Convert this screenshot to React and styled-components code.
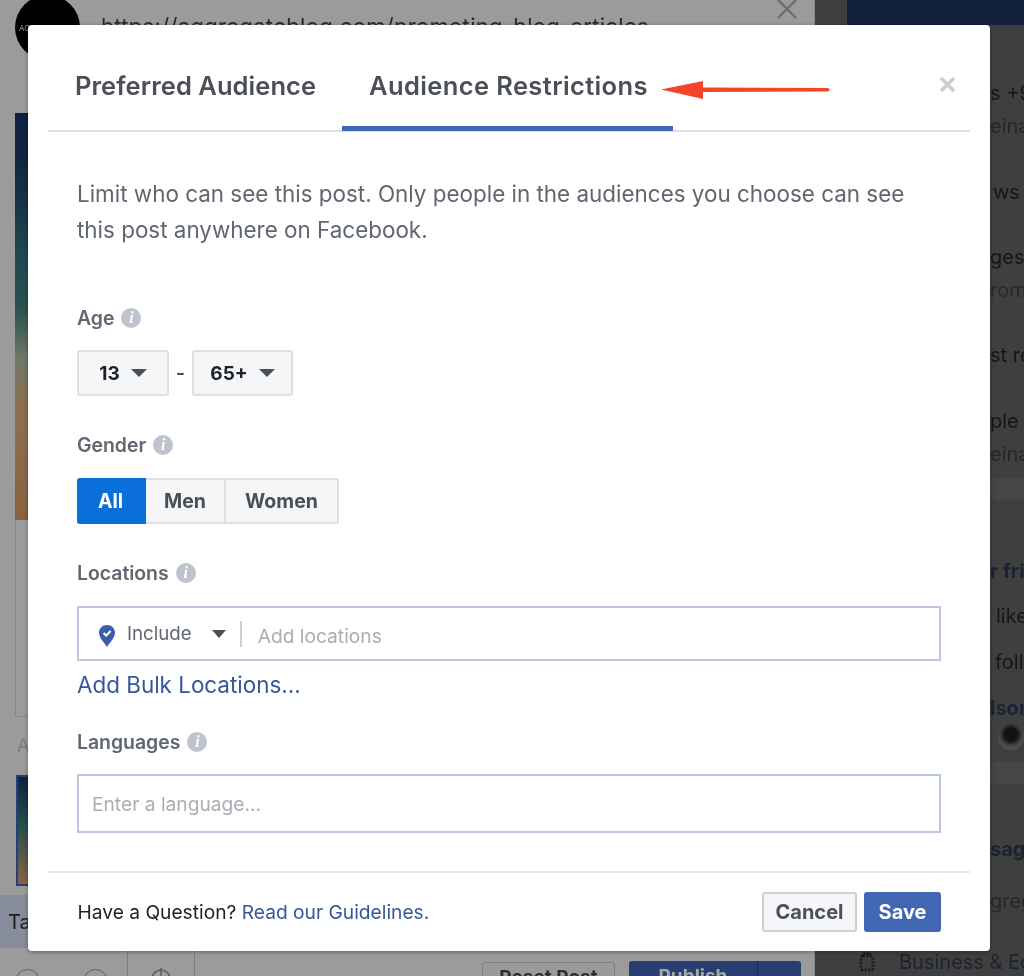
import React from 'react';
import styled, { createGlobalStyle } from 'styled-components';

const GlobalStyle = createGlobalStyle`
  html, body { margin: 0; padding: 0; background: #9b9b9b; }
  body { font-family: Inter, "Liberation Sans", sans-serif; }
`;

// --- Page behind the dialog ---

const Page = styled.div`
  position: relative;
  width: 1024px;
  height: 976px;
  overflow: hidden;
`;

const Backdrop = styled.div`
  display: flex;
  width: 100%;
  height: 100%;
  filter: blur(0.6px);
`;

const Composer = styled.div`
  position: relative;
  width: 815px;
  display: flex;
  flex-direction: column;
  background: #9b9b9b;
  border-right: 1px solid #8a8a8a;
  box-sizing: border-box;
`;

const ComposerHead = styled.div`
  height: 113px;
  display: flex;
  padding-left: 15px;
  flex-shrink: 0;
`;

const Avatar = styled.div`
  width: 65px;
  height: 65px;
  margin-top: -5px;
  border-radius: 50%;
  background: #000;
  color: #9a9a9a;
  font-size: 8px;
  display: flex;
  align-items: center;
  padding-left: 4px;
  box-sizing: border-box;
`;

const UrlText = styled.div`
  margin: 13px 0 0 21px;
  font-size: 22px;
  color: #2a2a2a;
  letter-spacing: 0.32px;
  white-space: nowrap;
`;

const DismissMark = styled.svg`
  position: absolute;
  top: 0;
  left: 777px;
  width: 20px;
  height: 19px;
`;

const PhotoCard = styled.div`
  width: 200px;
  height: 604px;
  margin-left: 15px;
  border-left: 1px solid #878787;
  border-bottom: 1px solid #878787;
  box-sizing: border-box;
  flex-shrink: 0;
`;

const Photo = styled.div`
  height: 407px;
  margin-left: -1px;
  background: linear-gradient(180deg, #0f2140 0%, #11263f 12%, #1f4850 35%, #2a5250 48%, #6e7768 60%, #8c6f50 72%, #8a6240 100%);
`;

const AddLabel = styled.div`
  margin: 18px 0 0 17px;
  font-size: 18px;
  color: #7c7c7c;
`;

const Thumb = styled.div`
  width: 120px;
  height: 111px;
  margin: 19px 0 0 16px;
  border: 2px solid #24407c;
  box-sizing: border-box;
  background: linear-gradient(180deg, #0f2140 0%, #24504f 45%, #8a6240 100%);
  flex-shrink: 0;
`;

const TagBar = styled.div`
  height: 53px;
  margin-top: 9px;
  padding-left: 8px;
  display: flex;
  align-items: center;
  background: #878c9a;
  font-size: 20px;
  color: #1c1c1c;
  flex-shrink: 0;
`;

const ActionBar = styled.div`
  display: flex;
  align-items: flex-start;
  flex: 1;
  padding-left: 15px;
  box-sizing: border-box;
`;

const RoundGlyph = styled.div`
  width: 25px;
  height: 25px;
  margin: 21px 0 0 ${(p) => p.$gap}px;
  border: 1.5px solid #5d5d5d;
  border-radius: 50%;
  box-sizing: border-box;
  flex-shrink: 0;
`;

const TargetGlyph = styled.svg`
  width: 22px;
  height: 22px;
  margin: 20px 0 0 22px;
  flex-shrink: 0;
`;

const BarDivider = styled.div`
  width: 1px;
  height: 28px;
  margin-left: ${(p) => p.$gap}px;
  background: #808080;
  flex-shrink: 0;
`;

const ResetButton = styled.div`
  width: 133px;
  height: 30px;
  margin: 14px 0 0 287px;
  background: #9a9a9a;
  border: 1px solid #7d7d7d;
  border-radius: 3px;
  box-sizing: border-box;
  text-align: center;
  font-size: 19px;
  font-weight: 700;
  color: #2f2f2f;
  padding-top: 3px;
  flex-shrink: 0;
`;

const PublishButton = styled.div`
  width: 172px;
  height: 30px;
  margin: 13px 0 0 14px;
  background: #263f70;
  border-radius: 3px;
  display: flex;
  font-size: 19px;
  font-weight: 700;
  color: #a7a7a7;
  flex-shrink: 0;
`;

const PublishLabel = styled.div`
  width: 128px;
  text-align: center;
  padding-top: 4px;
  border-right: 1px solid #1a2c50;
`;

const Sidebar = styled.div`
  width: 209px;
  display: flex;
  flex-direction: column;
  background: #3f3f3f;
  flex-shrink: 0;
  overflow: hidden;
`;

const SideHeader = styled.div`
  height: 25px;
  margin-left: 32px;
  background: #10203d;
  flex-shrink: 0;
`;

const SideRow = styled.div`
  height: 30px;
  margin-top: ${(p) => p.$gap}px;
  padding-left: ${(p) => p.$indent}px;
  display: flex;
  align-items: center;
  font-size: 20px;
  font-weight: ${(p) => (p.$bold ? 700 : 400)};
  color: ${(p) => (p.$tone === 'navy' ? '#1a2333' : p.$tone === 'muted' ? '#26282c' : '#161616')};
  white-space: nowrap;
  flex-shrink: 0;
`;

const SideBand = styled.div`
  height: 22px;
  margin: ${(p) => p.$gap}px 0 0 32px;
  background: #464646;
  flex-shrink: 0;
`;

const FriendPic = styled.div`
  width: 26px;
  height: 26px;
  border-radius: 50%;
  background: radial-gradient(circle at 50% 40%, #111 0 30%, #4a4a4a 60%, #5a5a5a 100%);
`;

const CategoryIcon = styled.svg`
  width: 16px;
  height: 20px;
  margin-right: 24px;
  flex-shrink: 0;
`;

// --- Dialog ---

const Modal = styled.div`
  position: absolute;
  top: 25px;
  left: 28px;
  width: 962px;
  height: 926px;
  background: #fff;
  border-radius: 4px;
  box-shadow: 0 1px 4px rgba(0, 0, 0, 0.35);
  padding: 0 20px;
  box-sizing: border-box;
  display: flex;
  flex-direction: column;
  color: #606770;
  filter: blur(0.25px);
`;

const TabBar = styled.div`
  position: relative;
  height: 107px;
  display: flex;
  align-items: stretch;
  border-bottom: 2px solid #dddfe2;
  box-sizing: border-box;
  flex-shrink: 0;
`;

const Tab = styled.div`
  height: 106px;
  width: ${(p) => p.$width}px;
  margin-left: ${(p) => p.$gap}px;
  padding: 44px 0 0 ${(p) => p.$inset}px;
  box-sizing: border-box;
  font-size: 25.5px;
  line-height: 34px;
  font-weight: 600;
  letter-spacing: ${(p) => (p.$active ? '0.38px' : '0.05px')};
  color: #4b4f56;
  white-space: nowrap;
  border-bottom: ${(p) => (p.$active ? '5px solid #4267b2' : 'none')};
`;

const CloseGlyph = styled.svg`
  position: absolute;
  top: 51px;
  right: 14px;
  width: 17px;
  height: 17px;
`;

const ArrowMark = styled.svg`
  position: absolute;
  top: 56px;
  left: 613px;
  width: 170px;
  height: 18px;
`;

const Body = styled.div`
  flex: 1;
  padding: 44px 30px 0 29px;
  display: flex;
  flex-direction: column;
  align-items: flex-start;
`;

const Intro = styled.p`
  margin: 0 0 58px;
  font-size: 22.43px;
  line-height: 36px;
  color: #606770;
  white-space: nowrap;
`;

const FieldLabel = styled.div`
  display: flex;
  align-items: center;
  gap: 7px;
  height: 24px;
  font-size: 19.4px;
  font-weight: 600;
  color: #606770;
`;

const InfoBadge = styled.span`
  width: 20px;
  height: 20px;
  border-radius: 50%;
  background: #bec3cd;
  color: #fff;
  font-family: "Liberation Serif", serif;
  font-style: italic;
  font-weight: 700;
  font-size: 16px;
  line-height: 20px;
  text-align: center;
`;

const AgeRow = styled.div`
  display: flex;
  align-items: center;
  margin: 20px 0 37px;
`;

const SelectButton = styled.div`
  width: ${(p) => p.$width}px;
  height: 46px;
  display: flex;
  align-items: center;
  justify-content: center;
  gap: 11px;
  background: #f5f6f7;
  border: 2px solid #dddfe2;
  border-radius: 3px;
  box-sizing: border-box;
  font-size: 19px;
  font-weight: 700;
  color: #1d2129;
`;

const Caret = styled.span`
  width: 0;
  height: 0;
  border-left: ${(p) => p.$half || 8}px solid transparent;
  border-right: ${(p) => p.$half || 8}px solid transparent;
  border-top: 8px solid #4b4f56;
`;

const Dash = styled.span`
  width: 23px;
  text-align: center;
  font-size: 20px;
  font-weight: 600;
  color: #4b4f56;
`;

const Segmented = styled.div`
  display: flex;
  height: 46px;
  margin: 21px 0 37px;
`;

const Segment = styled.div`
  width: ${(p) => p.$width}px;
  display: flex;
  align-items: center;
  justify-content: center;
  box-sizing: border-box;
  font-size: 19.5px;
  font-weight: 700;
  color: ${(p) => (p.$active ? '#fff' : '#4b4f56')};
  background: ${(p) => (p.$active ? '#0a6fd8' : '#f5f6f7')};
  border: 2px solid ${(p) => (p.$active ? '#0a6fd8' : '#dddfe2')};
  border-left-width: 0;
  border-radius: ${(p) => (p.$active ? '3px 0 0 3px' : p.$last ? '0 3px 3px 0' : 0)};
`;

const LocationBox = styled.div`
  width: 864px;
  height: 55px;
  margin: 21px 0 9px;
  display: flex;
  align-items: center;
  padding-left: 20px;
  border: 2px solid #bcc8dc;
  box-sizing: border-box;
`;

const PinIcon = styled.svg`
  width: 16px;
  height: 22px;
  margin-top: 4px;
  flex-shrink: 0;
`;

const IncludeText = styled.span`
  margin: -1px 20px 0 12px;
  font-size: 18.7px;
  color: #606770;
`;

const VerticalRule = styled.span`
  width: 2px;
  height: 26px;
  margin: 0 16px 0 14px;
  background: #c9d1de;
`;

const PlaceholderText = styled.span`
  margin-top: ${(p) => p.$shift || 0}px;
  font-size: 19.2px;
  color: #a9adb4;
`;

const BulkLink = styled.a`
  font-size: 22.43px;
  line-height: 30px;
  color: #365899;
  text-decoration: none;
  margin-bottom: 30px;
`;

const LanguageBox = styled.div`
  width: 864px;
  height: 59px;
  margin: 20px 0 0;
  display: flex;
  align-items: center;
  padding-left: 13px;
  border: 2px solid #bcc8dc;
  box-sizing: border-box;
`;

const Footer = styled.div`
  height: 80px;
  display: flex;
  align-items: flex-start;
  justify-content: space-between;
  padding: 19px 29px 0 29.5px;
  border-top: 2px solid #e5e5e5;
  box-sizing: border-box;
  flex-shrink: 0;
`;

const QuestionText = styled.div`
  font-size: 19.2px;
  line-height: 40px;
  color: #1d2129;
`;

const GuideLink = styled.a`
  color: #365899;
  text-decoration: none;
`;

const FooterActions = styled.div`
  display: flex;
  gap: 7px;
`;

const FooterButton = styled.div`
  height: 40px;
  width: ${(p) => p.$width}px;
  display: flex;
  align-items: center;
  justify-content: center;
  box-sizing: border-box;
  border-radius: 3px;
  font-size: 20px;
  font-weight: 700;
  color: ${(p) => (p.$primary ? '#fff' : '#4b4f56')};
  background: ${(p) => (p.$primary ? '#4267b2' : '#f5f6f7')};
  border: 2px solid ${(p) => (p.$primary ? '#4267b2' : '#ced0d4')};
`;

const Info = () => <InfoBadge>i</InfoBadge>;

export default function App() {
  return (
    <>
      <GlobalStyle />
      <Page>
        <Backdrop>
          <Composer>
            <ComposerHead>
              <Avatar>AG</Avatar>
              <UrlText>https://aggregateblog.com/promoting-blog-articles</UrlText>
            </ComposerHead>
            <DismissMark viewBox="0 0 20 19">
              <path d="M1 0 L19 18 M19 0 L1 18" stroke="#6d6d6d" strokeWidth="2.4" />
            </DismissMark>
            <PhotoCard>
              <Photo />
            </PhotoCard>
            <AddLabel>A</AddLabel>
            <Thumb />
            <TagBar>Ta</TagBar>
            <ActionBar>
              <RoundGlyph $gap={0} />
              <RoundGlyph $gap={43} />
              <BarDivider $gap={19} />
              <TargetGlyph viewBox="0 0 22 22">
                <circle cx="11" cy="11" r="9" fill="none" stroke="#5d5d5d" strokeWidth="1.5" />
                <path d="M11 0 V22 M0 11 H22" stroke="#5d5d5d" strokeWidth="1.5" />
              </TargetGlyph>
              <BarDivider $gap={22} />
              <ResetButton>Reset Post</ResetButton>
              <PublishButton>
                <PublishLabel>Publish</PublishLabel>
              </PublishButton>
            </ActionBar>
          </Composer>
          <Sidebar>
            <SideHeader />
            <SideRow $gap={53} $indent={175}>s +9</SideRow>
            <SideRow $gap={3} $indent={175} $tone="muted">eina</SideRow>
            <SideRow $gap={36} $indent={178}>ws</SideRow>
            <SideRow $gap={35} $indent={175}>ges</SideRow>
            <SideRow $gap={3} $indent={175} $tone="muted">rom</SideRow>
            <SideRow $gap={35} $indent={175}>st re</SideRow>
            <SideRow $gap={36} $indent={175}>ple</SideRow>
            <SideRow $gap={3} $indent={175} $tone="muted">eina</SideRow>
            <SideBand $gap={9} />
            <SideRow $gap={56} $indent={175} $bold $tone="navy">r fri</SideRow>
            <SideRow $gap={15} $indent={181}>like</SideRow>
            <SideRow $gap={16} $indent={180}>foll</SideRow>
            <SideRow $gap={16} $indent={175} $bold $tone="navy">lson</SideRow>
            <SideRow $gap={-1} $indent={183}><FriendPic /></SideRow>
            <SideBand $gap={10} />
            <SideRow $gap={50} $indent={175} $bold $tone="navy">sag</SideRow>
            <SideRow $gap={22} $indent={175} $tone="muted">greg</SideRow>
            <SideRow $gap={31} $indent={44} $tone="navy">
              <CategoryIcon viewBox="0 0 16 20">
                <rect x="2" y="4" width="12" height="14" rx="2" fill="none" stroke="#1a1a1a" strokeWidth="3" strokeDasharray="2 1.5" />
                <path d="M5 4 V1.5 H11 V4" fill="none" stroke="#1a1a1a" strokeWidth="1.5" />
              </CategoryIcon>
              Business &amp; Eco
            </SideRow>
          </Sidebar>
        </Backdrop>

        <Modal>
          <TabBar>
            <Tab $width={294} $gap={0} $inset={27}>Preferred Audience</Tab>
            <Tab $width={331} $gap={0} $inset={27} $active>Audience Restrictions</Tab>
            <ArrowMark viewBox="0 0 170 18">
              <path d="M0 8.5 L42 0 L42 6.5 L167 7 Q170 8.5 167 10.5 L42 11 L42 18 Z" fill="#f2452a" />
            </ArrowMark>
            <CloseGlyph viewBox="0 0 17 17">
              <path d="M2 2 L15 15 M15 2 L2 15" stroke="#c9ccd2" strokeWidth="3.6" />
            </CloseGlyph>
          </TabBar>
          <Body>
            <Intro>
              Limit who can see this post. Only people in the audiences you choose can see
              <br />
              this post anywhere on Facebook.
            </Intro>
            <FieldLabel>Age <Info /></FieldLabel>
            <AgeRow>
              <SelectButton $width={92}>13 <Caret /></SelectButton>
              <Dash>-</Dash>
              <SelectButton $width={101}>65+ <Caret /></SelectButton>
            </AgeRow>
            <FieldLabel>Gender <Info /></FieldLabel>
            <Segmented>
              <Segment $width={69} $active>All</Segment>
              <Segment $width={80}>Men</Segment>
              <Segment $width={113} $last>Women</Segment>
            </Segmented>
            <FieldLabel>Locations <Info /></FieldLabel>
            <LocationBox>
              <PinIcon viewBox="0 0 16 22">
                <path d="M8 0 C3.4 0 0 3.4 0 7.8 C0 12.6 4.6 16.8 8 22 C11.4 16.8 16 12.6 16 7.8 C16 3.4 12.6 0 8 0 Z" fill="#3b5ea6" />
                <path d="M4.6 8 L7.2 10.6 L11.6 6" fill="none" stroke="#fff" strokeWidth="2" />
              </PinIcon>
              <IncludeText>Include</IncludeText>
              <Caret $half={7} />
              <VerticalRule />
              <PlaceholderText $shift={5}>Add locations</PlaceholderText>
            </LocationBox>
            <BulkLink href="#">Add Bulk Locations...</BulkLink>
            <FieldLabel>Languages <Info /></FieldLabel>
            <LanguageBox>
              <PlaceholderText>Enter a language...</PlaceholderText>
            </LanguageBox>
          </Body>
          <Footer>
            <QuestionText>
              Have a Question? <GuideLink href="#">Read our Guidelines.</GuideLink>
            </QuestionText>
            <FooterActions>
              <FooterButton $width={95}>Cancel</FooterButton>
              <FooterButton $width={77} $primary>Save</FooterButton>
            </FooterActions>
          </Footer>
        </Modal>
      </Page>
    </>
  );
}
